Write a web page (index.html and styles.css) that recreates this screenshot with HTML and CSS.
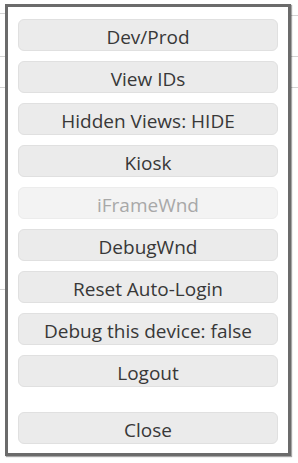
FILE: index.html
```html
<!DOCTYPE html>
<html>

<head>
  <title>Settings</title>
  <link rel="stylesheet" href="styles.css">
</head>

<body>
  <!-- page behind the dialog -->
  <div class="backdrop">
    <div class="bgCol left">
      <div class="bgRow" style="height: 14px"></div>
      <div class="bgRow" style="height: 43px"></div>
      <div class="bgRow" style="height: 31px"></div>
      <div class="bgRow" style="height: 202px"></div>
    </div>
    <div class="bgCol right">
      <div class="bgRow" style="height: 16px"></div>
      <div class="bgRow" style="height: 41px"></div>
      <div class="bgRow" style="height: 31px"></div>
    </div>
  </div>

  <div class="dialog">
    <button class="menuButton">Dev/Prod</button>
    <button class="menuButton">View IDs</button>
    <button class="menuButton">Hidden Views: HIDE</button>
    <button class="menuButton">Kiosk</button>
    <button class="menuButton" disabled>iFrameWnd</button>
    <button class="menuButton">DebugWnd</button>
    <button class="menuButton">Reset Auto-Login</button>
    <button class="menuButton">Debug this device: false</button>
    <button class="menuButton">Logout</button>
    <button class="menuButton closeButton">Close</button>
  </div>
</body>

</html>
```

FILE: styles.css
```css
body {
  margin: 0;
  background: #fff;
  font-family: "Open Sans", "Noto Sans", sans-serif;
  overflow: hidden;
}

.backdrop {
  display: flex;
  justify-content: space-between;
  height: 463px;
}

.bgCol.left {
  width: 6px;
}

.bgCol.right {
  width: 8px;
}

.bgRow {
  border-bottom: 1px solid #d4d4d4;
  box-sizing: border-box;
}

.dialog {
  position: absolute;
  top: 4px;
  left: 5px;
  width: 260px;
  padding: 12px 10px 9px 10px;
  background: #fff;
  border: 3px solid #6b6b6b;
  box-shadow: 1px 1px 1px rgba(0, 0, 0, 0.35);
  display: flex;
  flex-direction: column;
}

.menuButton {
  height: 32px;
  margin-bottom: 10px;
  background: #ebebeb;
  border: 1px solid #e0e0e0;
  border-radius: 6px;
  font-family: inherit;
  font-size: 19px;
  color: #383838;
  padding: 3px 0 0 0;
}

.menuButton:disabled {
  background: #f3f3f3;
  border-color: #ececec;
  color: #a8a8a8;
}

.closeButton {
  margin-top: 15px;
  margin-bottom: 0;
}
```
